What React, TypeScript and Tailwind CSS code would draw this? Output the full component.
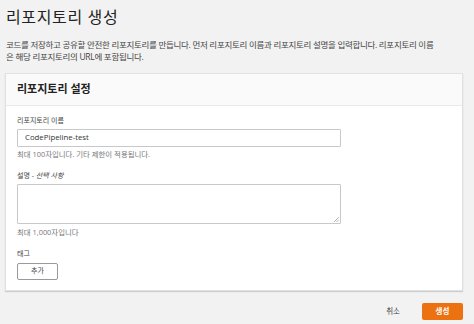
import React from 'react';

const font = { fontFamily: '"Open Sans", "Noto Sans CJK KR", sans-serif' };

export default function App() {
  return (
    <div className="w-[474px] h-[324px] overflow-hidden bg-[#f2f2f2] text-[#333]" style={font}>
      <div className="pl-[6px] pr-[11px] pt-[7px]">
        <h1 className="text-[16px] leading-[20px] text-[#222] font-normal tracking-[0.04em]">리포지토리 생성</h1>
        <p className="mt-[12px] text-[8.5px] leading-[12px] tracking-[-0.035em] text-[#444] whitespace-nowrap">
          코드를 저장하고 공유할 안전한 리포지토리를 만듭니다. 먼저 리포지토리 이름과 리포지토리 설명을 입력합니다. 리포지토리 이름
          <br />
          은 해당 리포지토리의 URL에 포함됩니다.
        </p>
      </div>

      <div className="ml-[5px] mt-[10px] w-[458px] bg-white border border-[#e1e1e1] shadow-[0_1px_1px_rgba(0,0,0,0.15)]">
        <div className="h-[32px] flex items-center px-[11px] bg-[#fafafa] border-b border-[#eaeaea]">
          <h2 className="text-[11px] font-bold text-[#222]">리포지토리 설정</h2>
        </div>

        <div className="px-[11px] pt-[10px] pb-[10px] flex flex-col">
          <label className="text-[7px] leading-[10px] text-[#444]">리포지토리 이름</label>
          <div className="mt-[3px] w-[324px] h-[18px] border border-[#c8c8c8] rounded-[1px] flex items-center px-[7px]">
            <span className="text-[7.8px] text-[#333]">CodePipeline-test</span>
          </div>
          <p className="mt-[2px] text-[7.4px] leading-[10px] text-[#777]">최대 100자입니다. 기타 제한이 적용됩니다.</p>

          <label className="mt-[12px] text-[7px] leading-[10px] text-[#444]">
            설명 - <i>선택 사항</i>
          </label>
          <div className="relative mt-[3px] w-[324px] h-[40px] border border-[#c8c8c8] rounded-[1px]">
            <svg className="absolute right-[1px] bottom-[1px]" width="5" height="5" viewBox="0 0 5 5">
              <path d="M5 0 L0 5 M5 2.5 L2.5 5" stroke="#999" strokeWidth="0.7" />
            </svg>
          </div>
          <p className="mt-[3px] text-[7.4px] leading-[10px] text-[#777]">최대 1,000자입니다</p>

          <label className="mt-[12px] text-[7px] leading-[10px] text-[#444]">태그</label>
          <button className="mt-[4px] w-[41px] h-[17px] border border-[#999] rounded-[2px] bg-white text-[7px] text-[#444] flex items-center justify-center">
            추가
          </button>
        </div>
      </div>

      <div className="flex items-center justify-end gap-[22px] pr-[11px] mt-[12px]">
        <span className="text-[7.5px] text-[#444]">취소</span>
        <button className="w-[41px] h-[17px] rounded-[2px] bg-[#ec7211] text-white text-[7.5px] font-bold flex items-center justify-center">
          생성
        </button>
      </div>
    </div>
  );
}
